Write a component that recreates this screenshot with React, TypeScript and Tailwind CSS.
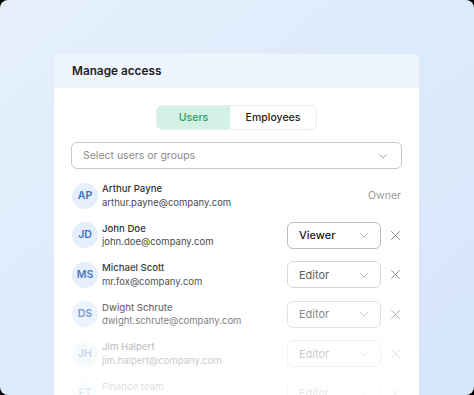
import * as React from "react"

type Person = {
    initials: string
    name: string
    email: string
    role?: string
    fade: string
}

const people: Person[] = [
    { initials: "AP", name: "Arthur Payne", email: "arthur.payne@company.com", fade: "opacity-100" },
    { initials: "JD", name: "John Doe", email: "john.doe@company.com", role: "Viewer", fade: "opacity-100" },
    { initials: "MS", name: "Michael Scott", email: "mr.fox@company.com", role: "Editor", fade: "opacity-95" },
    { initials: "DS", name: "Dwight Schrute", email: "dwight.schrute@company.com", role: "Editor", fade: "opacity-70" },
    { initials: "JH", name: "Jim Halpert", email: "jim.halpert@company.com", role: "Editor", fade: "opacity-30" },
    { initials: "FT", name: "Finance team", email: "finance@company.com", role: "Editor", fade: "opacity-15" },
]

function Chevron({ className = "" }: { className?: string }) {
    return (
        <svg width="12" height="12" viewBox="0 0 12 12" fill="none" className={className}>
            <path d="M2.5 4.5 6 8l3.5-3.5" stroke="currentColor" strokeWidth="1" strokeLinecap="round" strokeLinejoin="round" />
        </svg>
    )
}

function Cross() {
    return (
        <svg width="11" height="11" viewBox="0 0 11 11" fill="none" className="text-[#8c8c8c]">
            <path d="M1.5 1.5l8 8M9.5 1.5l-8 8" stroke="currentColor" strokeWidth="1" strokeLinecap="round" />
        </svg>
    )
}

function Row({ p }: { p: Person }) {
    const strong = p.role === "Viewer"
    return (
        <div className={`flex items-center h-[39.5px] ${p.fade}`}>
            <div className="w-[26px] h-[26px] rounded-full bg-[#e5effb] flex items-center justify-center text-[10.5px] font-semibold text-[#3f72bd]">
                {p.initials}
            </div>
            <div className="ml-[4px] flex flex-col leading-[13.5px]">
                <span className="text-[9.6px] font-medium text-[#333]">{p.name}</span>
                <span className="text-[9.5px] text-[#4a4a4a]">{p.email}</span>
            </div>
            <div className="ml-auto flex items-center">
                {p.role ? (
                    <>
                        <div className={`w-[94px] h-[27px] rounded-[6px] border flex items-center pl-[11px] pr-[10px] ${strong ? "border-[#bdbdbd]" : "border-[#d6d6d6]"}`}>
                            <span className={`text-[11px] ${strong ? "font-medium text-[#222]" : "text-[#555]"}`}>{p.role}</span>
                            <Chevron className="ml-auto text-[#b0b0b0]" />
                        </div>
                        <div className="w-[21px] flex justify-end pr-[1px]">
                            <Cross />
                        </div>
                    </>
                ) : (
                    <span className="text-[10.5px] text-[#9a9a9a] pr-[1px]">Owner</span>
                )}
            </div>
        </div>
    )
}

export default function App() {
    return (
        <div className="w-[474px] h-[395px] bg-black overflow-hidden" style={{ fontFamily: "Inter, 'Noto Sans', sans-serif" }}>
            <div className="w-full h-full rounded-[8px] bg-gradient-to-br from-[#e6f0fc] to-[#d5e5fa] pt-[54px] pl-[54px] overflow-hidden">
                <div className="w-[365px] h-[341px] bg-white rounded-t-[8px] overflow-hidden">
                    <div className="h-[34px] bg-[#eef5fe] flex items-center pl-[18px] pt-[1px]">
                        <span className="text-[11.8px] font-semibold text-[#1d1d1d]">Manage access</span>
                    </div>
                    <div className="px-[17px] pt-[17px]">
                        <div className="flex justify-center">
                            <div className="flex h-[25px] rounded-[6px] border border-[#ececec] overflow-hidden text-[10.5px]">
                                <div className="w-[73px] bg-[#d3f1e5] text-[#2a9d6e] font-medium flex items-center justify-center">Users</div>
                                <div className="w-[86px] text-[#222] font-medium flex items-center justify-center">Employees</div>
                            </div>
                        </div>
                        <div className="mt-[12px] h-[27px] rounded-[6px] border border-[#c8c8c8] flex items-center pl-[11px] pr-[12px]">
                            <span className="text-[10.5px] text-[#8a8a8a]">Select users or groups</span>
                            <Chevron className="ml-auto text-[#a8a8a8]" />
                        </div>
                        <div className="mt-[7px] pl-[1px]">
                            {people.map((p) => (
                                <Row key={p.initials} p={p} />
                            ))}
                        </div>
                    </div>
                </div>
            </div>
        </div>
    )
}
